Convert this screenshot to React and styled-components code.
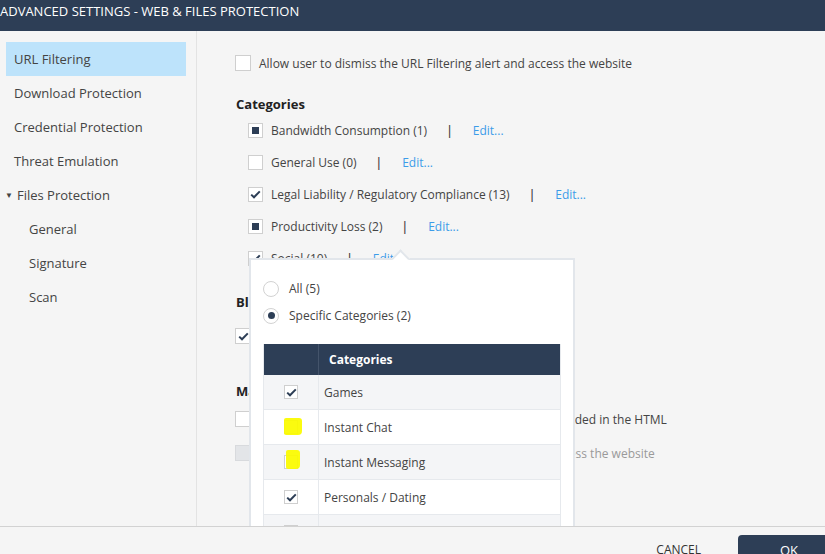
import React from 'react';
import styled, { createGlobalStyle } from 'styled-components';

const NAVY = '#2d3e56';
const BG = '#f5f5f5';

const Global = createGlobalStyle`
  html, body { margin: 0; padding: 0; overflow: hidden; background: ${BG}; }
  body { font-family: "Open Sans", "Liberation Sans", sans-serif; color: #444; }
  * { box-sizing: border-box; }
`;

const Shell = styled.div`
  width: 825px;
  height: 600px;
  display: grid;
  grid-template-rows: 31px 495px 1fr;
`;

const TitleBar = styled.header`
  background: ${NAVY};
  color: #fff;
  font-size: 13px;
  line-height: 23px;
  white-space: nowrap;
`;

const Body = styled.div`
  display: grid;
  grid-template-columns: 197px 1fr;
  min-height: 0;
`;

const Sidebar = styled.nav`
  border-right: 1px solid #e3e3e3;
  padding: 11px 10px 0 6px;
  display: flex;
  flex-direction: column;
`;

const NavItem = styled.div`
  height: 34px;
  display: flex;
  align-items: center;
  font-size: 13px;
  color: #444;
  margin-left: ${p => (p.$indent < 0 ? p.$indent : 0)}px;
  padding-left: ${p => Math.max(p.$indent, 0)}px;
  background: ${p => (p.$active ? '#bde3fb' : 'transparent')};
  white-space: nowrap;
`;

const Caret = styled.span`
  font-size: 8px;
  color: #444;
  margin-right: 4px;
  line-height: 1;
`;

const Content = styled.main`
  position: relative;
  overflow: hidden;
  padding: 16px 0 0 38px;
  display: flex;
  flex-direction: column;
`;

const Row = styled.div`
  height: ${p => p.$h || 32}px;
  display: flex;
  align-items: center;
  gap: 8px;
  font-size: 12px;
  color: ${p => (p.$disabled ? '#9a9a9a' : '#444')};
  white-space: nowrap;
  padding-left: ${p => p.$indent || 0}px;
  margin-top: ${p => p.$mt || 0}px;
`;

const Heading = styled.h3`
  margin: ${p => p.$mt}px 0 0 1px;
  font-size: 13px;
  line-height: 20px;
  font-weight: 700;
  color: #222;
  white-space: nowrap;
`;

const List = styled.div`
  display: flex;
  flex-direction: column;
`;

const Sep = styled.span`
  margin: 0 12px 0 11px;
  color: #444;
  font-weight: 600;
`;

const EditLink = styled.a`
  color: #3c9ce9;
  text-decoration: none;
`;

const Box = styled.span`
  position: relative;
  flex: none;
  width: ${p => p.$size}px;
  height: ${p => p.$size}px;
  border: 1px solid ${p => (p.$disabled ? '#d8dadd' : '#cfcfcf')};
  background: ${p => (p.$disabled ? '#e3e5e8' : '#fff')};
  display: inline-flex;
  align-items: center;
  justify-content: center;
`;

const PartialMark = styled.span`
  width: 7px;
  height: 7px;
  background: ${NAVY};
`;

function Checkbox({ state = 'empty', size = 15 }) {
  return (
    <Box $size={size} $disabled={state === 'disabled'}>
      {state === 'partial' && <PartialMark />}
      {state === 'checked' && (
        <svg width="11" height="9" viewBox="0 0 11 9">
          <path d="M1.2 4.6 L4 7.3 L9.8 1.4" fill="none" stroke={NAVY} strokeWidth="2" />
        </svg>
      )}
    </Box>
  );
}

const Popover = styled.div`
  position: absolute;
  left: 52px;
  top: 227px;
  width: 326px;
  height: 330px;
  background: #fff;
  border: 2px solid #e2e6eb;
  padding: 15px 12px 0 12px;
  &::before {
    content: '';
    position: absolute;
    top: -8px;
    left: 143px;
    width: 11px;
    height: 11px;
    background: #fff;
    border-top: 2px solid #e2e6eb;
    border-left: 2px solid #e2e6eb;
    transform: rotate(45deg);
  }
`;

const RadioRow = styled.label`
  height: 27px;
  display: flex;
  align-items: center;
  gap: 10px;
  font-size: 12px;
  color: #444;
`;

const Radio = styled.span`
  width: 16px;
  height: 16px;
  border-radius: 50%;
  border: 1px solid #d2d2d2;
  background: #fff;
  display: inline-flex;
  align-items: center;
  justify-content: center;
  &::after {
    content: '';
    width: 7px;
    height: 7px;
    border-radius: 50%;
    background: ${p => (p.$on ? NAVY : 'transparent')};
  }
`;

const Table = styled.div`
  margin-top: 15px;
  border: 1px solid #e6e9ed;
  border-top: none;
  display: grid;
  grid-template-columns: 54px 1fr;
`;

const HeadCell = styled.div`
  height: 31px;
  background: ${NAVY};
  color: #fff;
  font-size: 12px;
  font-weight: 700;
  display: flex;
  align-items: center;
  padding-left: 10px;
  border-left: ${p => (p.$first ? 'none' : '1px solid #44546b')};
`;

const Cell = styled.div`
  position: relative;
  height: 35px;
  background: ${p => (p.$odd ? '#f4f5f7' : '#fff')};
  border-bottom: 1px solid #e6e9ed;
  border-left: ${p => (p.$first ? 'none' : '1px solid #e6e9ed')};
  display: flex;
  align-items: center;
  justify-content: ${p => (p.$first ? 'center' : 'flex-start')};
  padding-left: ${p => (p.$first ? 0 : 5)}px;
  font-size: 12px;
  color: #444;
`;

const Marker = styled.span`
  position: absolute;
  background: rgba(251, 251, 0, 0.94);
  border-radius: 2px 3px 4px 2px;
`;

const Footer = styled.footer`
  border-top: 1px solid #d2d2d2;
  background: ${BG};
  display: flex;
  justify-content: flex-end;
  align-items: flex-start;
  padding-top: 8px;
`;

const CancelButton = styled.button`
  height: 32px;
  padding: 0 18px 4px;
  margin-right: 19px;
  border: none;
  background: transparent;
  font-family: inherit;
  font-size: 12px;
  color: #333;
`;

const OkButton = styled.button`
  width: 102px;
  height: 32px;
  margin-right: -15px;
  border: none;
  border-radius: 4px;
  background: ${NAVY};
  color: #fff;
  font-family: inherit;
  font-size: 13px;
  padding-bottom: 4px;
`;

const NAV = [
  { label: 'URL Filtering', indent: 8, active: true },
  { label: 'Download Protection', indent: 8 },
  { label: 'Credential Protection', indent: 8 },
  { label: 'Threat Emulation', indent: 8 },
  { label: 'Files Protection', indent: -1, caret: true },
  { label: 'General', indent: 23 },
  { label: 'Signature', indent: 23 },
  { label: 'Scan', indent: 23 },
];

const CATEGORIES = [
  { label: 'Bandwidth Consumption (1)', state: 'partial' },
  { label: 'General Use (0)', state: 'empty' },
  { label: 'Legal Liability / Regulatory Compliance (13)', state: 'checked' },
  { label: 'Productivity Loss (2)', state: 'partial' },
  { label: 'Social (10)', state: 'checked' },
];

const SUBCATS = [
  { label: 'Games', state: 'checked' },
  { label: 'Instant Chat', state: 'empty', marker: { left: 20, top: 8, width: 18, height: 17 } },
  { label: 'Instant Messaging', state: 'empty', marker: { left: 22, top: 5, width: 14, height: 19 } },
  { label: 'Personals / Dating', state: 'checked' },
  { label: 'Social Networking', state: 'empty' },
];

export default function App() {
  return (
    <>
      <Global />
      <Shell>
        <TitleBar>ADVANCED SETTINGS - WEB &amp; FILES PROTECTION</TitleBar>
        <Body>
          <Sidebar>
            {NAV.map(n => (
              <NavItem key={n.label} $indent={n.indent} $active={n.active}>
                {n.caret && <Caret>▼</Caret>}
                {n.label}
              </NavItem>
            ))}
          </Sidebar>
          <Content>
            <Row>
              <Checkbox size={16} />
              <span>Allow user to dismiss the URL Filtering alert and access the website</span>
            </Row>
            <Heading $mt={15}>Categories</Heading>
            <List>
              {CATEGORIES.map(c => (
                <Row key={c.label} $indent={13}>
                  <Checkbox state={c.state} />
                  <span>{c.label}</span>
                  <Sep>|</Sep>
                  <EditLink>Edit...</EditLink>
                </Row>
              ))}
            </List>
            <Heading $mt={18}>Blacklist / Whitelist</Heading>
            <Row $mt={8}>
              <Checkbox state="checked" size={16} />
              <span>Enable the Blacklist / Whitelist</span>
            </Row>
            <Heading $mt={29}>Malicious Scripts</Heading>
            <Row $h={34} $mt={1}>
              <Checkbox size={16} />
              <span>Block access to sites that contain malicious script embedded in the HTML</span>
            </Row>
            <Row $h={34} $disabled>
              <Checkbox state="disabled" size={16} />
              <span>Allow user to dismiss the Malicious Scripts alert and access the website</span>
            </Row>

            <Popover>
              <RadioRow>
                <Radio />
                All (5)
              </RadioRow>
              <RadioRow>
                <Radio $on />
                Specific Categories (2)
              </RadioRow>
              <Table>
                <HeadCell $first />
                <HeadCell>Categories</HeadCell>
                {SUBCATS.map((s, i) => (
                  <React.Fragment key={s.label}>
                    <Cell $first $odd={i % 2 === 0}>
                      <Checkbox state={s.state} size={14} />
                      {s.marker && (
                        <Marker
                          style={{
                            left: s.marker.left,
                            top: s.marker.top,
                            width: s.marker.width,
                            height: s.marker.height,
                          }}
                        />
                      )}
                    </Cell>
                    <Cell $odd={i % 2 === 0}>{s.label}</Cell>
                  </React.Fragment>
                ))}
              </Table>
            </Popover>
          </Content>
        </Body>
        <Footer>
          <CancelButton>CANCEL</CancelButton>
          <OkButton>OK</OkButton>
        </Footer>
      </Shell>
    </>
  );
}
